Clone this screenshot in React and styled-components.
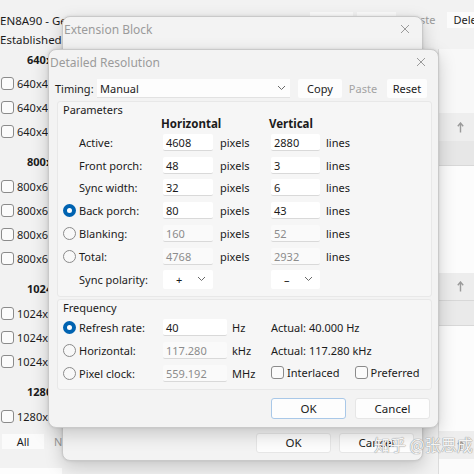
import React from 'react';
import styled, { createGlobalStyle } from 'styled-components';

const GlobalStyle = createGlobalStyle`
  html, body {
    margin: 0;
    padding: 0;
  }
  body {
    font-family: "Noto Sans", "Noto Sans CJK SC", sans-serif;
    font-size: 11px;
    color: #1b1b1b;
    background: #f0f0f0;
  }
  * {
    box-sizing: border-box;
  }
`;

const Screen = styled.div`
  position: relative;
  width: 474px;
  height: 474px;
  overflow: hidden;
  background: #f0f0f0;
`;

/* ---------- background main window ---------- */

const MainWindow = styled.div`
  display: flex;
  flex-direction: column;
  height: 100%;
  padding-top: 12px;
  background: #f2f2f2;
`;

const TopRow = styled.div`
  display: flex;
  align-items: center;
  justify-content: space-between;
  height: 18px;
  white-space: nowrap;
`;

const MonitorName = styled.span`
  font-size: 11.5px;
`;

const Toolbar = styled.div`
  display: flex;
  gap: 4px;
  margin-right: -20px;
`;

const ToolButton = styled.div`
  height: 16px;
  padding: 0 7px;
  line-height: 16px;
  background: ${(p) => (p.$disabled ? 'transparent' : '#fbfbfb')};
  color: ${(p) => (p.$disabled ? '#9a9a9a' : '#1b1b1b')};
`;

const SubTitle = styled.div`
  height: 18px;
  margin-top: 3px;
  line-height: 18px;
  white-space: nowrap;
  font-size: 11.5px;
`;

const MainBody = styled.div`
  flex: 1;
  display: grid;
  grid-template-columns: 62px 1fr 36px;
`;

const ListColumn = styled.div`
  display: flex;
  flex-direction: column;
  white-space: nowrap;
  overflow: hidden;
`;

const ListHead = styled.div`
  flex: none;
  height: ${(p) => (p.$first ? 22 : 24)}px;
  line-height: ${(p) => (p.$first ? 22 : 24)}px;
  margin-top: ${(p) => (p.$first ? 0 : 7)}px;
  padding-left: 27px;
  font-weight: 700;
`;

const ListItem = styled.div`
  flex: none;
  display: flex;
  align-items: center;
  gap: 3px;
  height: 24px;
  padding-left: 1px;
`;

const Check = styled.span`
  flex: none;
  display: inline-block;
  width: 13px;
  height: 13px;
  border: 1px solid #8b8b8b;
  border-radius: 3px;
  background: #fbfbfb;
`;

const ListFooter = styled.div`
  flex: none;
  display: flex;
  align-items: center;
  gap: 10px;
  height: 26px;
  padding-left: 2px;
`;

const SmallButton = styled.div`
  flex: none;
  width: 42px;
  height: 15px;
  line-height: 15px;
  text-align: center;
  background: #fbfbfb;
`;

const FadedText = styled.span`
  color: #9a9a9a;
`;

const BottomStub = styled.div`
  flex: none;
  margin-top: 14px;
  width: 62px;
  height: 10px;
  background: #fdfdfd;
`;

const RightStrip = styled.div`
  display: flex;
  flex-direction: column;
  border-left: 1px solid #dcdcdc;
`;

const StripBlock = styled.div`
  height: ${(p) => p.$h}px;
  flex: ${(p) => (p.$grow ? 1 : 'none')};
  display: flex;
  align-items: center;
  padding-left: 18px;
  background: ${(p) => p.$bg};
  border-bottom: ${(p) => (p.$line ? '1px solid #d8d8d8' : 'none')};
`;

/* ---------- floating windows ---------- */

const Window = styled.div`
  position: absolute;
  left: ${(p) => p.$x}px;
  top: ${(p) => p.$y}px;
  width: ${(p) => p.$w}px;
  height: ${(p) => p.$h}px;
  display: flex;
  flex-direction: column;
  background: ${(p) => p.$bg};
  border: 1px solid #c9c9c9;
  border-radius: 8px;
  box-shadow: 0 6px 18px rgba(0, 0, 0, 0.18), 0 0 3px rgba(0, 0, 0, 0.1);
`;

const TitleBar = styled.div`
  flex: none;
  display: flex;
  align-items: center;
  justify-content: space-between;
  height: 24px;
  padding: 0 12px 0 1px;
  color: #9b9b9b;
  font-size: 12px;
`;

const Grow = styled.div`
  flex: 1;
`;

const Footer = styled.div`
  display: flex;
  justify-content: flex-end;
  gap: ${(p) => p.$gap}px;
  padding: 0 ${(p) => p.$pr}px ${(p) => p.$pb}px 0;
`;

const DialogButton = styled.div`
  width: 75px;
  height: ${(p) => p.$h}px;
  line-height: ${(p) => p.$h - 2}px;
  text-align: center;
  font-size: 11.5px;
  background: #fdfdfd;
  border: 1px solid ${(p) => (p.$focus ? '#a9c8e8' : '#e6e6e6')};
  border-radius: 3px;
`;

const DialogBody = styled.div`
  flex: 1;
  display: flex;
  flex-direction: column;
  padding: 5px 6px 8px 6px;
`;

const TimingRow = styled.div`
  display: flex;
  align-items: center;
  height: 19px;
`;

const TimingLabel = styled.span`
  width: 42px;
`;

const Dropdown = styled.div`
  display: flex;
  align-items: center;
  justify-content: space-between;
  width: 193px;
  height: 19px;
  padding: 0 4px 0 3px;
  margin-right: 8px;
  background: #fdfdfd;
  border-bottom: 1px solid #e2e2e2;
`;

const FlatButton = styled.div`
  width: ${(p) => p.$w}px;
  height: 19px;
  line-height: 19px;
  text-align: center;
  margin-right: ${(p) => p.$mr || 0}px;
  background: ${(p) => (p.$disabled ? 'transparent' : '#fdfdfd')};
  color: ${(p) => (p.$disabled ? '#a3a3a3' : '#1b1b1b')};
  border-radius: 2px;
`;

const Group = styled.div`
  margin: ${(p) => p.$mt}px 0 0 2px;
  padding: 0 0 ${(p) => p.$pb}px 5px;
  background: #f6f6f6;
  border: 1px solid #e8e8e8;
  border-radius: 3px;
`;

const Legend = styled.div`
  height: ${(p) => p.$h}px;
  line-height: ${(p) => p.$h}px;
`;

const Grid = styled.div`
  display: grid;
  grid-template-columns: ${(p) => p.$cols};
  grid-template-rows: ${(p) => p.$head || 'none'};
  grid-auto-rows: ${(p) => p.$row}px;
  align-items: center;
  white-space: nowrap;
`;

const HeadCell = styled.div`
  height: 14px;
  line-height: 14px;
  margin-left: -2px;
  font-weight: 700;
  font-size: 11.5px;
  grid-column: ${(p) => p.$col};
`;

const Radio = styled.span`
  width: 13px;
  height: 13px;
  border-radius: 50%;
  border: ${(p) => (p.$checked ? '4px solid #0063b1' : '1px solid #8a8a8a')};
  background: ${(p) => (p.$checked ? '#ffffff' : '#f8f8f8')};
`;

const Label = styled.span`
  grid-column: 2;
`;

const Field = styled.div`
  height: 17px;
  line-height: 17px;
  padding-left: 3px;
  background: ${(p) => (p.$disabled ? '#fafafa' : '#ffffff')};
  color: ${(p) => (p.$disabled ? '#8c8c8c' : '#1b1b1b')};
  border-bottom: 1px solid #d9d9d9;
  border-radius: 2px;
`;

const Select = styled.div`
  display: flex;
  align-items: center;
  justify-content: space-between;
  height: 19px;
  padding: 0 7px 0 13px;
  background: #ffffff;
  border-radius: 2px;
`;

const Unit = styled.span`
  padding-left: ${(p) => p.$pl}px;
`;

const CheckLabel = styled.span`
  display: inline-flex;
  align-items: center;
  gap: 3px;
  margin-right: ${(p) => p.$mr || 0}px;
`;

const Watermark = styled.div`
  position: absolute;
  left: 374px;
  top: 432px;
  font-family: "Noto Sans CJK SC", sans-serif;
  font-size: 16px;
  color: rgba(255, 255, 255, 0.92);
  text-shadow: 0 0 1px #8d8d8d, 0 0 1px #8d8d8d;
  white-space: nowrap;
`;

const Chevron = () => (
  <svg width="9" height="6" viewBox="0 0 9 6">
    <path d="M1 1 L4.5 4.5 L8 1" fill="none" stroke="#6a6a6a" strokeWidth="1" />
  </svg>
);

const CloseX = () => (
  <svg width="10" height="10" viewBox="0 0 10 10">
    <path d="M1 1 L9 9 M9 1 L1 9" stroke="#9a9a9a" strokeWidth="1" />
  </svg>
);

const UpArrow = () => (
  <svg width="7" height="11" viewBox="0 0 7 11">
    <path d="M3.5 10.5 V2 M0.8 4.2 L3.5 1 L6.2 4.2" fill="none" stroke="#9a9a9a" strokeWidth="1.4" />
  </svg>
);

const listData = [
  { head: '640x480' },
  { text: '640x480 @ 60Hz' },
  { text: '640x480 @ 72Hz' },
  { text: '640x480 @ 75Hz' },
  { head: '800x600' },
  { text: '800x600 @ 56Hz' },
  { text: '800x600 @ 60Hz' },
  { text: '800x600 @ 72Hz' },
  { text: '800x600 @ 75Hz' },
  { head: '1024x768' },
  { text: '1024x768 @ 60Hz' },
  { text: '1024x768 @ 70Hz' },
  { text: '1024x768 @ 75Hz' },
  { head: '1280x1024' },
  { text: '1280x1024 @ 75Hz' },
];

const paramRows = [
  { label: 'Active:', h: '4608', v: '2880' },
  { label: 'Front porch:', h: '48', v: '3' },
  { label: 'Sync width:', h: '32', v: '6' },
  { label: 'Back porch:', h: '80', v: '43', radio: true, checked: true },
  { label: 'Blanking:', h: '160', v: '52', radio: true, disabled: true },
  { label: 'Total:', h: '4768', v: '2932', radio: true, disabled: true },
];

const stripBlocks = [
  { h: 64, bg: '#f8f8f8' },
  { h: 28, bg: '#eeeeee', arrow: true },
  { h: 25, bg: '#e7e7e7', line: true },
  { h: 107, bg: '#fcfcfc' },
  { h: 28, bg: '#ededed', arrow: true, line: true },
  { h: 25, bg: '#eaeaea', line: true },
  { h: 105, bg: '#fcfcfc' },
  { h: 28, bg: '#eeeeee', arrow: true },
  { grow: true, bg: '#fbfbfb' },
];

const App = () => {
  return (
    <Screen>
      <GlobalStyle />

      <MainWindow>
        <TopRow>
          <MonitorName>EN8A90 - Generic PnP Monitor (active)</MonitorName>
          <Toolbar>
            <ToolButton>Edit...</ToolButton>
            <ToolButton>Copy</ToolButton>
            <ToolButton $disabled>Paste</ToolButton>
            <ToolButton>Delete</ToolButton>
          </Toolbar>
        </TopRow>
        <SubTitle>Established resolutions</SubTitle>
        <MainBody>
          <ListColumn>
            {listData.map((item, i) =>
              item.head ? (
                <ListHead key={i} $first={i === 0}>
                  {item.head}
                </ListHead>
              ) : (
                <ListItem key={i}>
                  <Check />
                  {item.text}
                </ListItem>
              )
            )}
            <ListFooter>
              <SmallButton>All</SmallButton>
              <FadedText>None</FadedText>
            </ListFooter>
            <BottomStub />
          </ListColumn>
          <div />
          <RightStrip>
            {stripBlocks.map((b, i) => (
              <StripBlock key={i} $h={b.h} $bg={b.bg} $line={b.line} $grow={b.grow}>
                {b.arrow && <UpArrow />}
              </StripBlock>
            ))}
          </RightStrip>
        </MainBody>
      </MainWindow>

      <Window $x={62} $y={16} $w={361} $h={445} $bg="#f3f3f3">
        <TitleBar>
          <span>Extension Block</span>
          <CloseX />
        </TitleBar>
        <Grow />
        <Footer $gap={8} $pr={8} $pb={7}>
          <DialogButton $h={20}>OK</DialogButton>
          <DialogButton $h={20}>Cancel</DialogButton>
        </Footer>
      </Window>

      <Window $x={48} $y={49} $w={391} $h={379} $bg="#f3f3f3">
        <TitleBar>
          <span>Detailed Resolution</span>
          <CloseX />
        </TitleBar>
        <DialogBody>
          <TimingRow>
            <TimingLabel>Timing:</TimingLabel>
            <Dropdown>
              <span>Manual</span>
              <Chevron />
            </Dropdown>
            <FlatButton $w={44} $mr={1}>Copy</FlatButton>
            <FlatButton $w={40} $mr={4} $disabled>Paste</FlatButton>
            <FlatButton $w={40}>Reset</FlatButton>
          </TimingRow>

          <Group $mt={3} $pb={5}>
            <Legend $h={15}>Parameters</Legend>
            <Grid $cols="16px 84px 50px 58px 49px auto" $head="14px" $row={22.8}>
              <HeadCell $col="3 / 5">Horizontal</HeadCell>
              <HeadCell $col="5 / 7">Vertical</HeadCell>
              {paramRows.map((r) => (
                <React.Fragment key={r.label}>
                  {r.radio ? <Radio $checked={r.checked} /> : <span />}
                  <Label>{r.label}</Label>
                  <Field $disabled={r.disabled}>{r.h}</Field>
                  <Unit $pl={7}>pixels</Unit>
                  <Field $disabled={r.disabled}>{r.v}</Field>
                  <Unit $pl={6}>lines</Unit>
                </React.Fragment>
              ))}
              <span />
              <Label>Sync polarity:</Label>
              <Select>
                <span>+</span>
                <Chevron />
              </Select>
              <span />
              <Select>
                <span>–</span>
                <Chevron />
              </Select>
              <span />
            </Grid>
          </Group>

          <Group $mt={2} $pb={4}>
            <Legend $h={16}>Frequency</Legend>
            <Grid $cols="16px 84px 64px 44px auto" $row={23}>
              <Radio $checked />
              <Label>Refresh rate:</Label>
              <Field>40</Field>
              <Unit $pl={5}>Hz</Unit>
              <span>Actual: 40.000 Hz</span>

              <Radio />
              <Label>Horizontal:</Label>
              <Field $disabled>117.280</Field>
              <Unit $pl={5}>kHz</Unit>
              <span>Actual: 117.280 kHz</span>

              <Radio />
              <Label>Pixel clock:</Label>
              <Field $disabled>559.192</Field>
              <Unit $pl={5}>MHz</Unit>
              <span>
                <CheckLabel $mr={15}>
                  <Check />
                  Interlaced
                </CheckLabel>
                <CheckLabel>
                  <Check />
                  Preferred
                </CheckLabel>
              </span>
            </Grid>
          </Group>

          <Grow />
          <Footer $gap={9} $pr={2} $pb={0}>
            <DialogButton $h={21} $focus>OK</DialogButton>
            <DialogButton $h={21}>Cancel</DialogButton>
          </Footer>
        </DialogBody>
      </Window>

      <Watermark>知乎 @张思成</Watermark>
    </Screen>
  );
};

export default App;
